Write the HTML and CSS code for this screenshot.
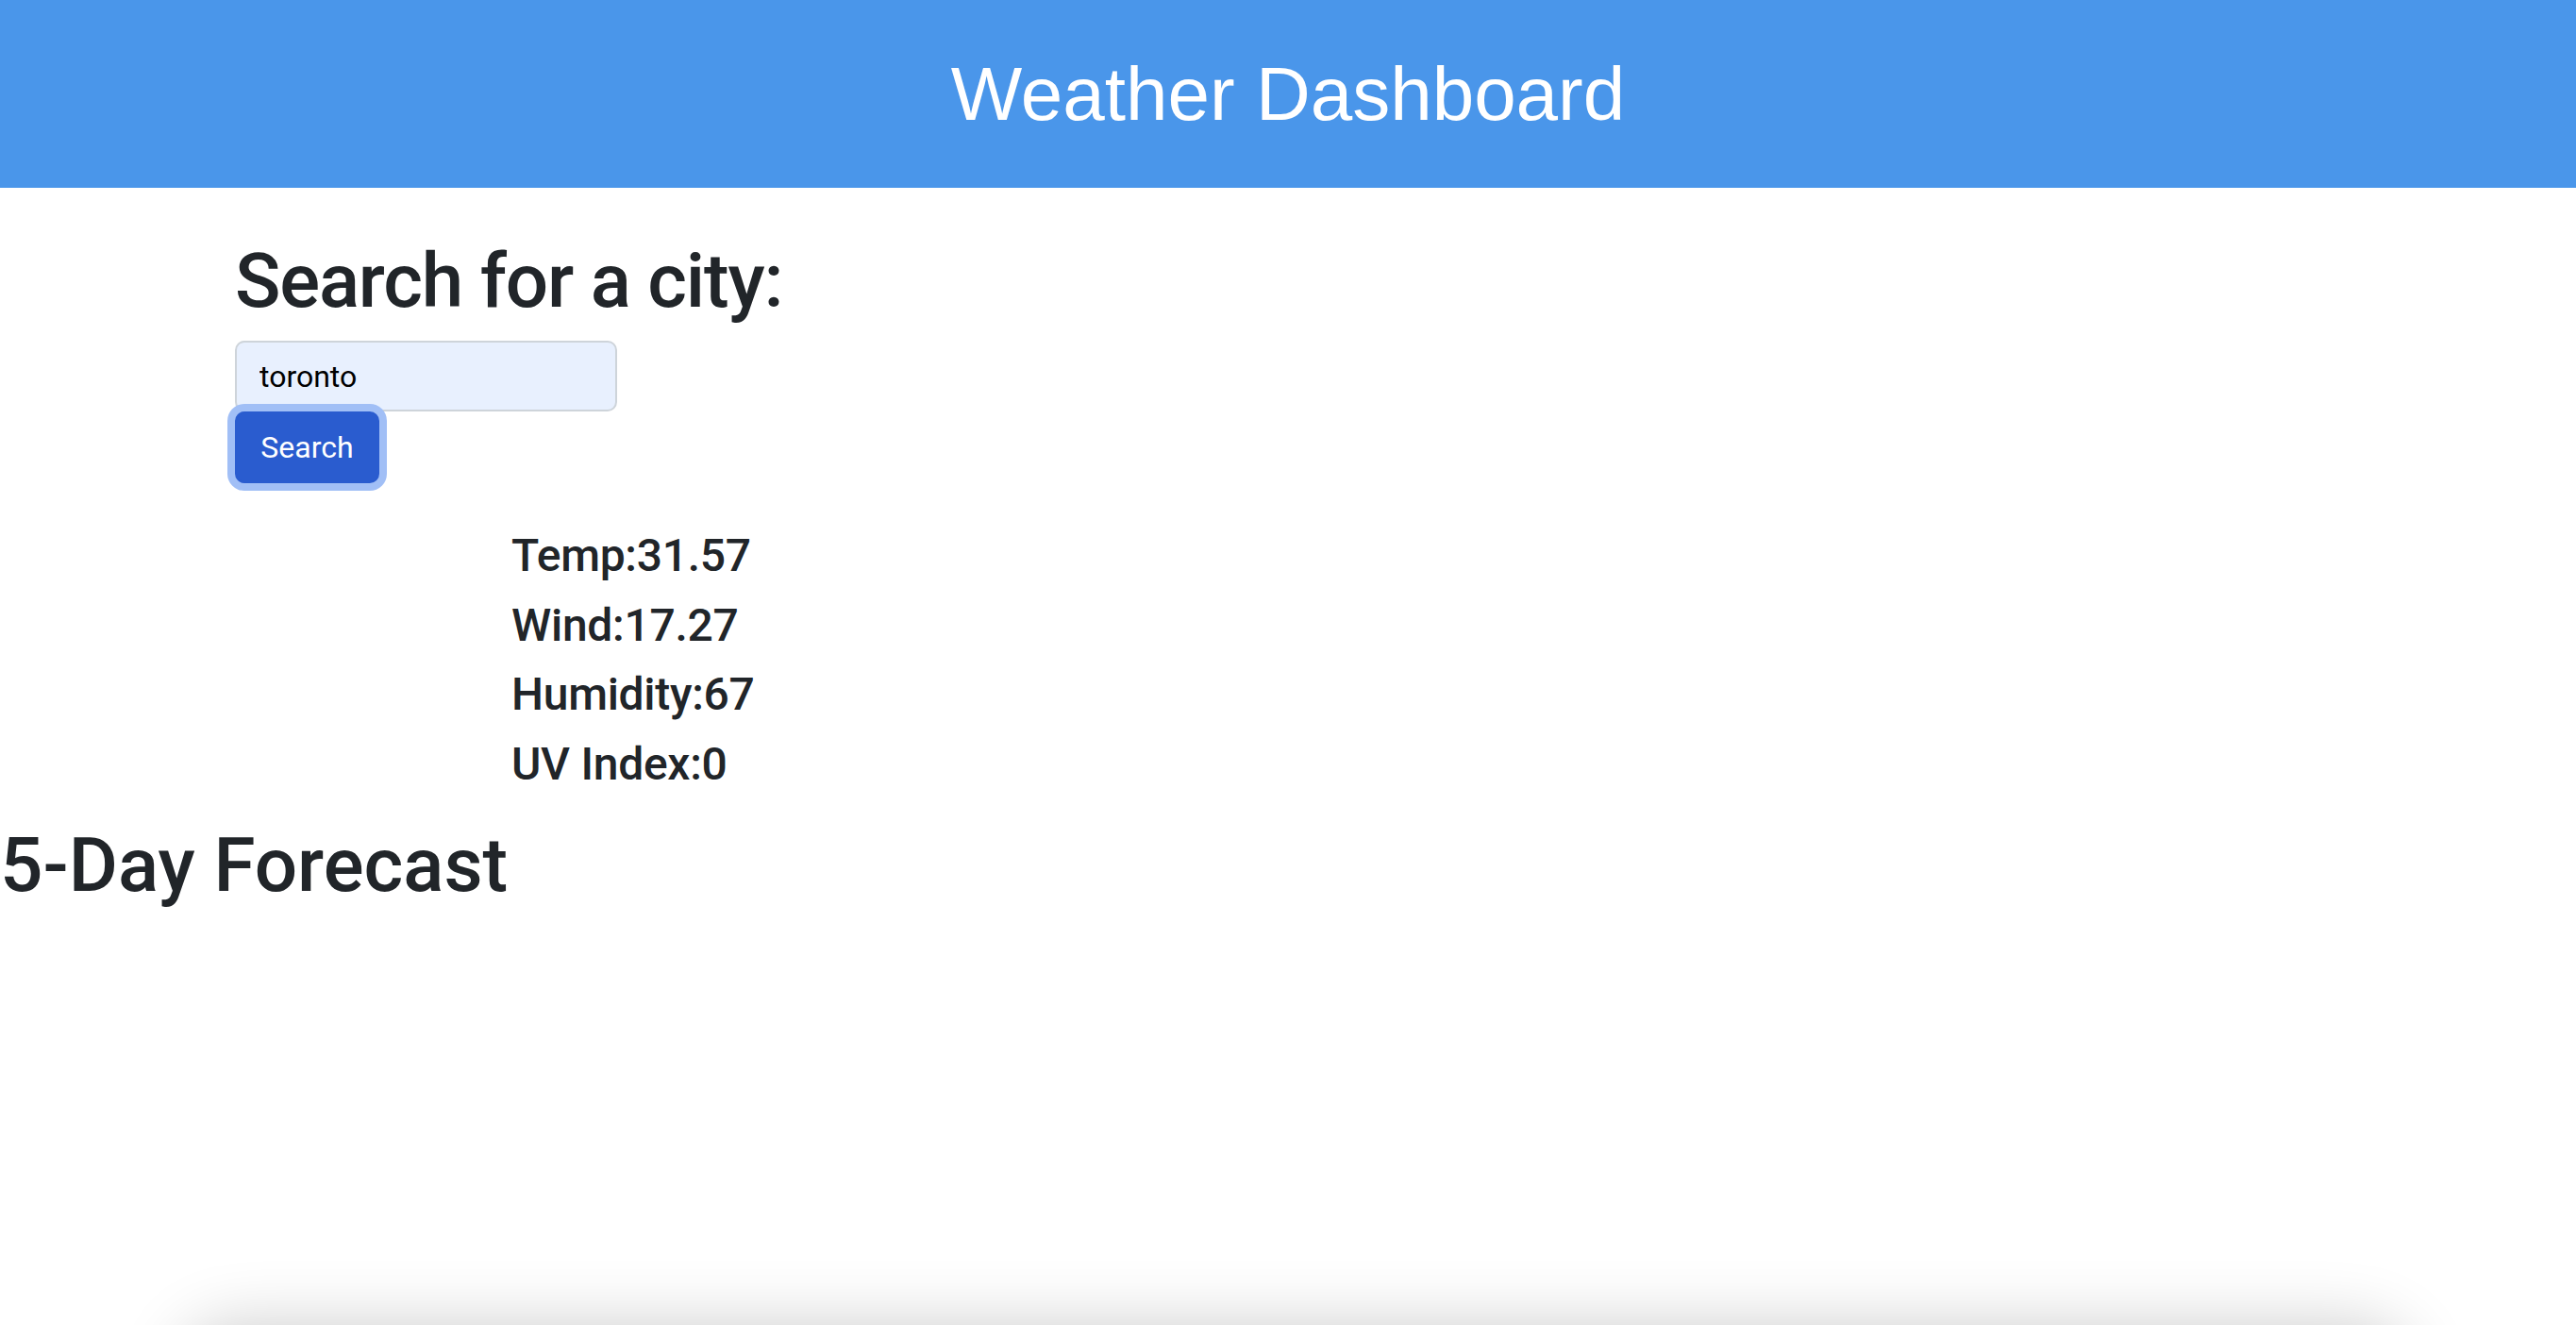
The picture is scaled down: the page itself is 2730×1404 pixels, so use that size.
FILE: index.html
```html
<!DOCTYPE html>
<html lang="en">
<head>
<meta charset="utf-8">
<title>Weather Dashboard</title>
<link rel="stylesheet" href="styles.css">
</head>
<body>
<header class="topbar">
  <h1 class="topbar-title">Weather Dashboard</h1>
</header>
<main class="page">
  <section class="search">
    <h1 class="search-title">Search for a city:</h1>
    <input class="search-input" type="text" value="toronto">
    <button class="search-btn" type="button">Search</button>
  </section>
  <section class="current">
    <h4 class="stat">Temp:31.57</h4>
    <h4 class="stat">Wind:17.27</h4>
    <h4 class="stat">Humidity:67</h4>
    <h4 class="stat">UV Index:0</h4>
  </section>
  <h1 class="forecast-title">5-Day Forecast</h1>
</main>
<div class="forecast-shadow"></div>
</body>
</html>
```
FILE: styles.css
```css
html, body {
  margin: 0;
  padding: 0;
  background: #ffffff;
}
body {
  font-family: Roboto, Inter, "Noto Sans", "Liberation Sans", sans-serif;
  color: #212529;
  overflow: hidden;
}
.topbar {
  height: 199px;
  background: #4a96ea;
  display: flex;
  align-items: center;
  justify-content: center;
  box-sizing: border-box;
  padding-top: 1px;
}
.topbar-title {
  margin: 0;
  font-family: "Liberation Sans", Arial, sans-serif;
  font-weight: 400;
  font-size: 80px;
  color: #ffffff;
  line-height: normal;
}
.page {
  padding-top: 51px;
}
.search {
  padding-left: 249px;
  display: flex;
  flex-direction: column;
  align-items: flex-start;
}
.search-title {
  margin: 0 0 15px 0;
  font-size: 80px;
  font-weight: 500;
  line-height: 1.2;
  letter-spacing: -1.2px;
}
.search-input {
  box-sizing: border-box;
  width: 405px;
  height: 75px;
  padding: 12px 24px;
  font-family: Roboto, Inter, sans-serif;
  font-size: 32px;
  line-height: 1.5;
  color: #000000;
  background: #e8f0fe;
  border: 2px solid #ced4da;
  border-radius: 10px;
  outline: none;
  margin: 0;
}
.search-btn {
  box-sizing: border-box;
  margin: 0;
  height: 76px;
  width: 153px;
  padding: 12px 24px;
  font-family: Roboto, Inter, sans-serif;
  font-size: 32px;
  line-height: 1.5;
  color: #ffffff;
  background: #2a5ccf;
  border: 2px solid #2a5ccf;
  border-radius: 10px;
  box-shadow: 0 0 0 8px #a1bff6;
}
.current {
  padding-left: 542px;
  padding-top: 48px;
  margin-bottom: 31px;
}
.stat {
  margin: 0 0 16px 0;
  font-size: 48px;
  font-weight: 500;
  line-height: 1.2;
  letter-spacing: -0.3px;
}
.forecast-title {
  margin: 0;
  font-size: 80px;
  font-weight: 500;
  line-height: 1.2;
}
.forecast-shadow {
  position: fixed;
  left: 190px;
  right: 175px;
  top: 100vh;
  height: 300px;
  border-radius: 60px;
  background: #ffffff;
  box-shadow: 0 0 70px rgba(0, 0, 0, 0.2);
}
```
